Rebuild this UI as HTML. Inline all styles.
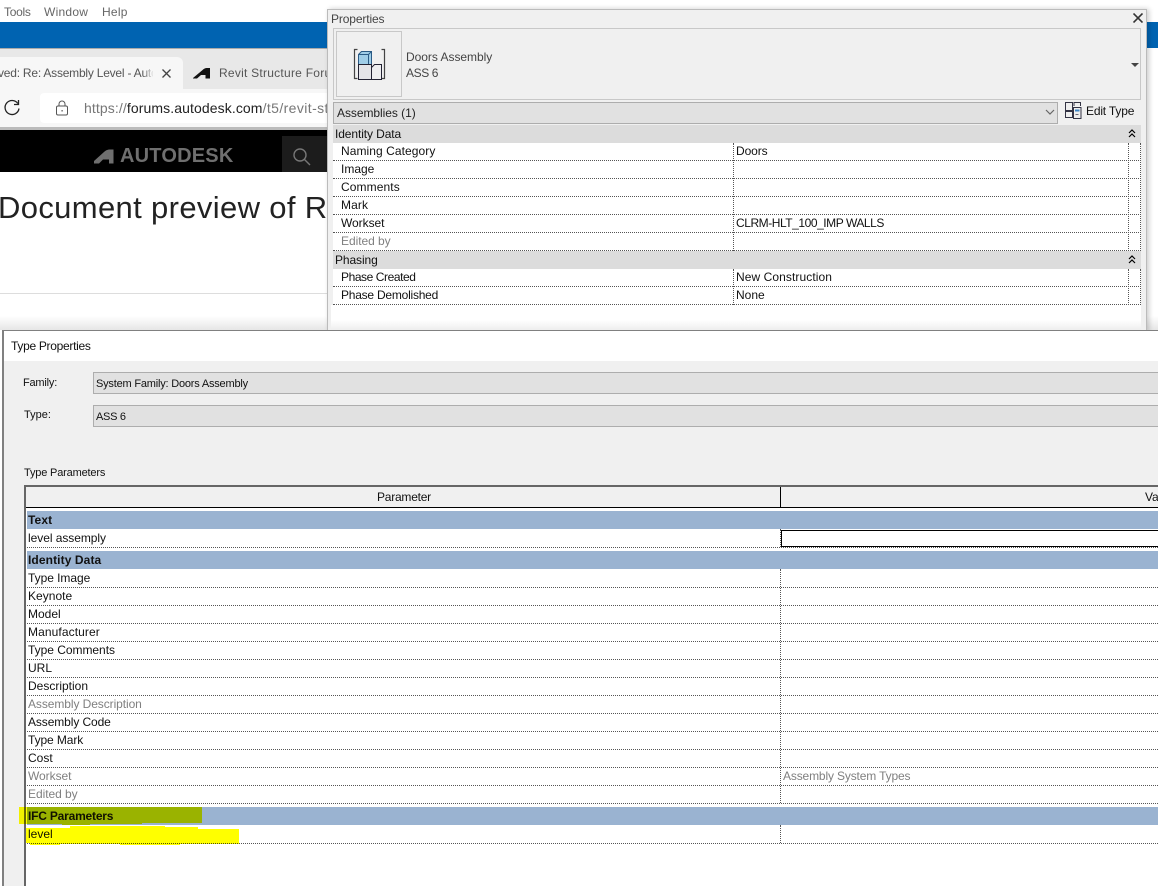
<!DOCTYPE html>
<html><head><meta charset="utf-8"><title>Type Properties</title>
<style>
html,body{margin:0;padding:0;background:#fff}
#p{position:relative;width:1158px;height:886px;overflow:hidden;background:#fff;font:12px/18px "Liberation Sans",sans-serif;color:#111;letter-spacing:0}
#p div{position:absolute;white-space:nowrap}
.g{color:#808080}
.b{font-weight:700;letter-spacing:.1px}
.hd{height:0;border-top:1px dotted #555}
.vd{width:0;border-left:1px dotted #555}
.band{background:#9ab3d1;left:27px;right:0;height:18px}
</style></head><body><div id="p">

<!-- browser chrome -->
<div style="left:4px;top:3px;color:#666;font-size:12px;letter-spacing:-.3px">Tools</div>
<div style="left:44px;top:3px;color:#666;font-size:12px;letter-spacing:.25px">Window</div>
<div style="left:102px;top:3px;color:#666;font-size:12px;letter-spacing:.25px">Help</div>
<div style="left:0;top:22px;width:1158px;height:26px;background:#0063b1"></div>
<div style="left:0;top:48px;width:330px;height:41px;background:#e8e8e8;border-top:1px solid #aaa"></div>
<div style="left:0;top:57px;width:183px;height:32px;background:#f7f7f7;border-radius:0 6px 0 0"></div>
<div style="left:-2px;top:64px;width:155px;overflow:hidden;color:#555;font-size:12px;letter-spacing:-.22px">ved: Re: Assembly Level - Autode</div>
<div style="left:143px;top:62px;width:11px;height:20px;background:linear-gradient(90deg,rgba(247,247,247,0),#f7f7f7)"></div>
<svg style="position:absolute;left:161px;top:68px" width="11" height="11" viewBox="0 0 11 11"><path d="M1.500 1.500l8 8M9.500 1.500l-8 8" stroke="#444" stroke-width="1.300" fill="none"/></svg>
<svg style="position:absolute;left:193px;top:67px" width="17" height="12" viewBox="0 0 17 12"><path d="M0 11L9 3.500C11 1.500 12.500 1 14 1H17V11.500H12.500V8H8L4 11.500H0Z" fill="#111"/></svg>
<div style="left:219px;top:64px;color:#555;font-size:12px;width:108px;overflow:hidden;letter-spacing:.25px">Revit Structure Forum</div>
<div style="left:0;top:89px;width:330px;height:38px;background:#f7f7f7"></div>
<div style="left:40px;top:93px;width:290px;height:30px;background:#fff;border-radius:4px 0 0 4px"></div>
<svg style="position:absolute;left:3px;top:99px" width="18" height="18" viewBox="0 0 18 18"><path d="M14.800 4.500A7 7 0 1 0 16 9.500" fill="none" stroke="#222" stroke-width="1.300"/><path d="M15.500 1V5.500H11" fill="none" stroke="#222" stroke-width="1.300"/></svg>
<svg style="position:absolute;left:55px;top:100px" width="14" height="16" viewBox="0 0 14 16"><rect x="1.500" y="6" width="11" height="9" rx="1.500" fill="none" stroke="#555"/><path d="M4 6V4a3 3 0 0 1 6 0v2" fill="none" stroke="#555"/><rect x="6.500" y="10" width="1.200" height="1.500" fill="#555"/></svg>
<div style="left:84px;top:99px;font-size:14px;letter-spacing:.1px;color:#222;width:243px;overflow:hidden"><span style="color:#777">https://</span>forums.autodesk.com<span style="color:#777;letter-spacing:.4px">/t5/revit-structure</span></div>
<div style="left:0;top:127px;width:330px;height:3px;background:#bbb"></div>
<div style="left:0;top:130px;width:330px;height:42px;background:#000"></div>
<svg style="position:absolute;left:94px;top:149px" width="20" height="15" viewBox="0 0 20 15"><path d="M0 14.500V12L10 3C12 1.200 13.500.5 16 .5H19.500V14.500H15V10.500H9L5 14.500H0Z" fill="#6f6f6f"/></svg>
<div style="left:120px;top:145px;font:700 20px/22px 'Liberation Sans',sans-serif;color:#6f6f6f;letter-spacing:.2px">AUTODESK</div>
<div style="left:282px;top:136px;width:48px;height:36px;background:#1c1c1c"></div>
<svg style="position:absolute;left:292px;top:147px" width="19" height="19" viewBox="0 0 19 19"><circle cx="8" cy="8" r="6" fill="none" stroke="#777" stroke-width="1.400"/><path d="M12.500 12.500L18 18" stroke="#777" stroke-width="1.400"/></svg>
<div style="left:-2px;top:189px;width:329px;overflow:hidden;font-size:31px;line-height:38px;letter-spacing:.35px;color:#222">Document preview of Re</div>
<div style="left:0;top:293px;width:330px;height:1px;background:#ddd"></div>
<div style="left:0;top:316px;width:1158px;height:14px;background:linear-gradient(#fff,#e6e6e6)"></div>

<!-- Properties palette -->
<div style="left:327px;top:9px;width:818px;height:322px;background:#f0f0f0;border:1px solid #bbb;border-bottom:0;box-shadow:2px 0 5px rgba(0,0,0,.2)"></div>
<div style="left:331px;top:10px;color:#444;letter-spacing:-.13px">Properties</div>
<svg style="position:absolute;left:1133px;top:13px" width="10" height="10" viewBox="0 0 10 10"><path d="M.5.5l9 9M9.500.5l-9 9" stroke="#333" stroke-width="1.600" fill="none"/></svg>
<div style="left:333px;top:28px;width:806px;height:70px;border:1px solid #c8c8c8"></div>
<div style="left:336px;top:31px;width:64px;height:64px;border:1px solid #c8c8c8"></div>
<svg style="position:absolute;left:350px;top:46px" width="40" height="36" viewBox="0 0 40 36">
<path d="M7.500 3.500H4.500V32.500H7.500M31.500 3.500H34.500V32.500H31.500" fill="none" stroke="#444" stroke-width="1.200"/>
<path d="M8.500 8.500L11.500 5.500H21.500V18.500H8.500Z" fill="#9fcde8" stroke="#2a5a85"/>
<path d="M8.500 8.500H18.500L21.500 5.500M18.500 8.500V18.500" fill="none" stroke="#2a5a85"/>
<rect x="8.500" y="18.500" width="13" height="15" fill="#e4e4e8" stroke="#223"/>
<path d="M21.500 21.500L24.500 18.500H31.500V33.500H21.500Z" fill="#eeeef0" stroke="#223"/>
</svg>
<div style="left:406px;top:48px;color:#444;letter-spacing:-.03px">Doors Assembly</div>
<div style="left:406px;top:64px;color:#444;letter-spacing:-.4px">ASS 6</div>
<div style="left:1131px;top:63px;width:0;height:0;border:4px solid transparent;border-top:4px solid #444;border-bottom:0"></div>

<div style="left:333px;top:102px;width:723px;height:20px;background:#e1e1e1;border:1px solid #adadad"></div>
<div style="left:337px;top:104px;color:#222;letter-spacing:-.05px">Assemblies (1)</div>
<svg style="position:absolute;left:1045px;top:109px" width="10" height="7" viewBox="0 0 10 7"><path d="M1 1l4 4 4-4" fill="none" stroke="#666" stroke-width="1.200"/></svg>
<svg style="position:absolute;left:1065px;top:102px" width="17" height="17" viewBox="0 0 17 17"><path d="M7.500.5H.5V8.500H7.500ZM7.500 9.500H.5V15.500H7.500ZM15.500 4V.5H9V4" fill="#eee" stroke="#334"/><rect x="8.500" y="5.500" width="7.500" height="11" fill="#eee" stroke="#334"/><rect x="10" y="7.500" width="4.500" height="2" fill="#3d85c6"/><path d="M10.500 12.500h3" stroke="#667"/></svg>
<div style="left:1086px;top:102px;color:#111;letter-spacing:-.18px">Edit Type</div>

<div style="left:333px;top:125px;width:808px;height:18px;background:#dcdcdc"></div>
<div style="left:335px;top:125px;color:#111;letter-spacing:-.1px">Identity Data</div>
<div style="left:333px;top:143px;width:808px;height:108px;background:#fff"></div>
<div style="left:333px;top:251px;width:808px;height:18px;background:#dcdcdc"></div>
<div style="left:335px;top:251px;color:#111;letter-spacing:-.1px">Phasing</div>
<div style="left:333px;top:269px;width:808px;height:36px;background:#fff"></div>
<div style="left:331px;top:305px;width:810px;height:25px;background:linear-gradient(#fff 60%,#eee)"></div>

<div class="hd" style="left:333px;width:808px;top:160px"></div>
<div class="hd" style="left:333px;width:808px;top:178px"></div>
<div class="hd" style="left:333px;width:808px;top:196px"></div>
<div class="hd" style="left:333px;width:808px;top:214px"></div>
<div class="hd" style="left:333px;width:808px;top:232px"></div>
<div class="hd" style="left:333px;width:808px;top:250px"></div>
<div class="hd" style="left:333px;width:808px;top:286px"></div>
<div class="hd" style="left:333px;width:808px;top:304px"></div>
<div class="vd" style="left:733px;top:143px;height:108px"></div>
<div class="vd" style="left:1128px;top:143px;height:108px"></div>
<div class="vd" style="left:1140px;top:143px;height:108px"></div>
<div class="vd" style="left:733px;top:269px;height:36px"></div>
<div class="vd" style="left:1128px;top:269px;height:36px"></div>
<div class="vd" style="left:1140px;top:269px;height:36px"></div>
<svg style="position:absolute;left:1128px;top:129px" width="8" height="9" viewBox="0 0 8 9"><path d="M1 4l3-3 3 3M1 8l3-3 3 3" fill="none" stroke="#000" stroke-width="1.200"/></svg>
<svg style="position:absolute;left:1128px;top:255px" width="8" height="9" viewBox="0 0 8 9"><path d="M1 4l3-3 3 3M1 8l3-3 3 3" fill="none" stroke="#000" stroke-width="1.200"/></svg>

<div style="left:341px;top:142px;letter-spacing:.07px">Naming Category</div><div style="left:736px;top:142px;letter-spacing:-.1px">Doors</div>
<div style="left:341px;top:160px">Image</div>
<div style="left:341px;top:178px;letter-spacing:.1px">Comments</div>
<div style="left:341px;top:196px;letter-spacing:.1px">Mark</div>
<div style="left:341px;top:214px;letter-spacing:-.05px">Workset</div><div style="left:736px;top:214px;letter-spacing:-.45px">CLRM-HLT_100_IMP WALLS</div>
<div class="g" style="left:341px;top:232px;letter-spacing:-.05px">Edited by</div>
<div style="left:341px;top:268px;letter-spacing:-.43px">Phase Created</div><div style="left:736px;top:268px;letter-spacing:.08px">New Construction</div>
<div style="left:341px;top:286px;letter-spacing:-.23px">Phase Demolished</div><div style="left:736px;top:286px">None</div>

<!-- Type Properties dialog -->
<div style="left:2px;top:330px;width:1156px;height:556px;background:#f0f0f0;border-left:2px solid #808080;border-top:1px solid #808080;box-sizing:border-box"></div>
<div style="left:4px;top:331px;width:1154px;height:30px;background:#fff"></div>
<div style="left:11px;top:337px;color:#111;letter-spacing:-.3px">Type Properties</div>
<div style="left:23px;top:374px;font-size:11px;letter-spacing:-.2px;line-height:19px">Family:</div>
<div style="left:93px;top:372px;width:1070px;height:20px;background:#e1e1e1;border:1px solid #adadad"></div>
<div style="left:96px;top:375px;font-size:11px;letter-spacing:-.2px">System Family: Doors Assembly</div>
<div style="left:24px;top:406px;font-size:11px;line-height:19px">Type:</div>
<div style="left:93px;top:405px;width:1070px;height:20px;background:#e1e1e1;border:1px solid #adadad"></div>
<div style="left:96px;top:408px;font-size:11px;letter-spacing:-.3px">ASS 6</div>
<div style="left:24px;top:464px;font-size:11px;letter-spacing:-.17px">Type Parameters</div>

<div style="left:24px;top:485px;width:1134px;height:401px;background:#fff;border-left:2px solid #666;border-top:2px solid #666;box-sizing:border-box"></div>
<div style="left:26px;top:487px;width:1132px;height:20px;background:#f0f0f0"></div>
<div style="left:26px;top:507px;width:1132px;height:1px;background:#000"></div>
<div style="left:780px;top:487px;width:1px;height:20px;background:#000"></div>
<div style="left:377px;top:488px;letter-spacing:-.23px">Parameter</div>
<div style="left:1145px;top:488px;letter-spacing:-.1px">Va</div>

<div class="band" style="top:511px"></div>
<div class="band" style="top:551px"></div>
<div class="band" style="top:807px"></div>

<div class="hd" style="left:27px;right:0;top:547px"></div>
<div class="hd" style="left:27px;right:0;top:587px"></div>
<div class="hd" style="left:27px;right:0;top:605px"></div>
<div class="hd" style="left:27px;right:0;top:623px"></div>
<div class="hd" style="left:27px;right:0;top:641px"></div>
<div class="hd" style="left:27px;right:0;top:659px"></div>
<div class="hd" style="left:27px;right:0;top:677px"></div>
<div class="hd" style="left:27px;right:0;top:695px"></div>
<div class="hd" style="left:27px;right:0;top:713px"></div>
<div class="hd" style="left:27px;right:0;top:731px"></div>
<div class="hd" style="left:27px;right:0;top:749px"></div>
<div class="hd" style="left:27px;right:0;top:767px"></div>
<div class="hd" style="left:27px;right:0;top:785px"></div>
<div class="hd" style="left:27px;right:0;top:803px"></div>
<div class="hd" style="left:27px;right:0;top:843px"></div>
<div class="vd" style="left:780px;top:529px;height:18px"></div>
<div class="vd" style="left:780px;top:569px;height:234px"></div>
<div class="vd" style="left:780px;top:825px;height:18px"></div>
<div style="left:781px;top:530px;width:390px;height:15px;background:#fff;border:1.500px solid #000"></div>

<div class="b" style="left:28px;top:511px">Text</div>
<div style="left:28px;top:529px;letter-spacing:-.05px">level assemply</div>
<div class="b" style="left:28px;top:551px">Identity Data</div>
<div style="left:28px;top:569px;letter-spacing:-.05px">Type Image</div>
<div style="left:28px;top:587px;letter-spacing:.03px">Keynote</div>
<div style="left:28px;top:605px">Model</div>
<div style="left:28px;top:623px;letter-spacing:.1px">Manufacturer</div>
<div style="left:28px;top:641px;letter-spacing:-.03px">Type Comments</div>
<div style="left:28px;top:659px">URL</div>
<div style="left:28px;top:677px">Description</div>
<div class="g" style="left:28px;top:695px;letter-spacing:-.08px">Assembly Description</div>
<div style="left:28px;top:713px;letter-spacing:-.1px">Assembly Code</div>
<div style="left:28px;top:731px;letter-spacing:-.1px">Type Mark</div>
<div style="left:28px;top:749px">Cost</div>
<div class="g" style="left:28px;top:767px;letter-spacing:-.05px">Workset</div>
<div class="g" style="left:783px;top:767px;letter-spacing:-.15px">Assembly System Types</div>
<div class="g" style="left:28px;top:785px;letter-spacing:-.05px">Edited by</div>
<div class="b" style="left:28px;top:807px;letter-spacing:-.2px">IFC Parameters</div>
<div style="left:28px;top:825px">level</div>

<svg style="position:absolute;left:0;top:800px;mix-blend-mode:multiply" width="300" height="50" viewBox="0 0 300 50">
<path d="M19 7H202V23H142V24H90V25H62V24H19Z" fill="#ffff00"/>
<path d="M26 28H70V26H165V27H198V29H239V44H180V45H120V44H60V45H30V43H26Z" fill="#ffff00"/>
</svg>

</div></body></html>
